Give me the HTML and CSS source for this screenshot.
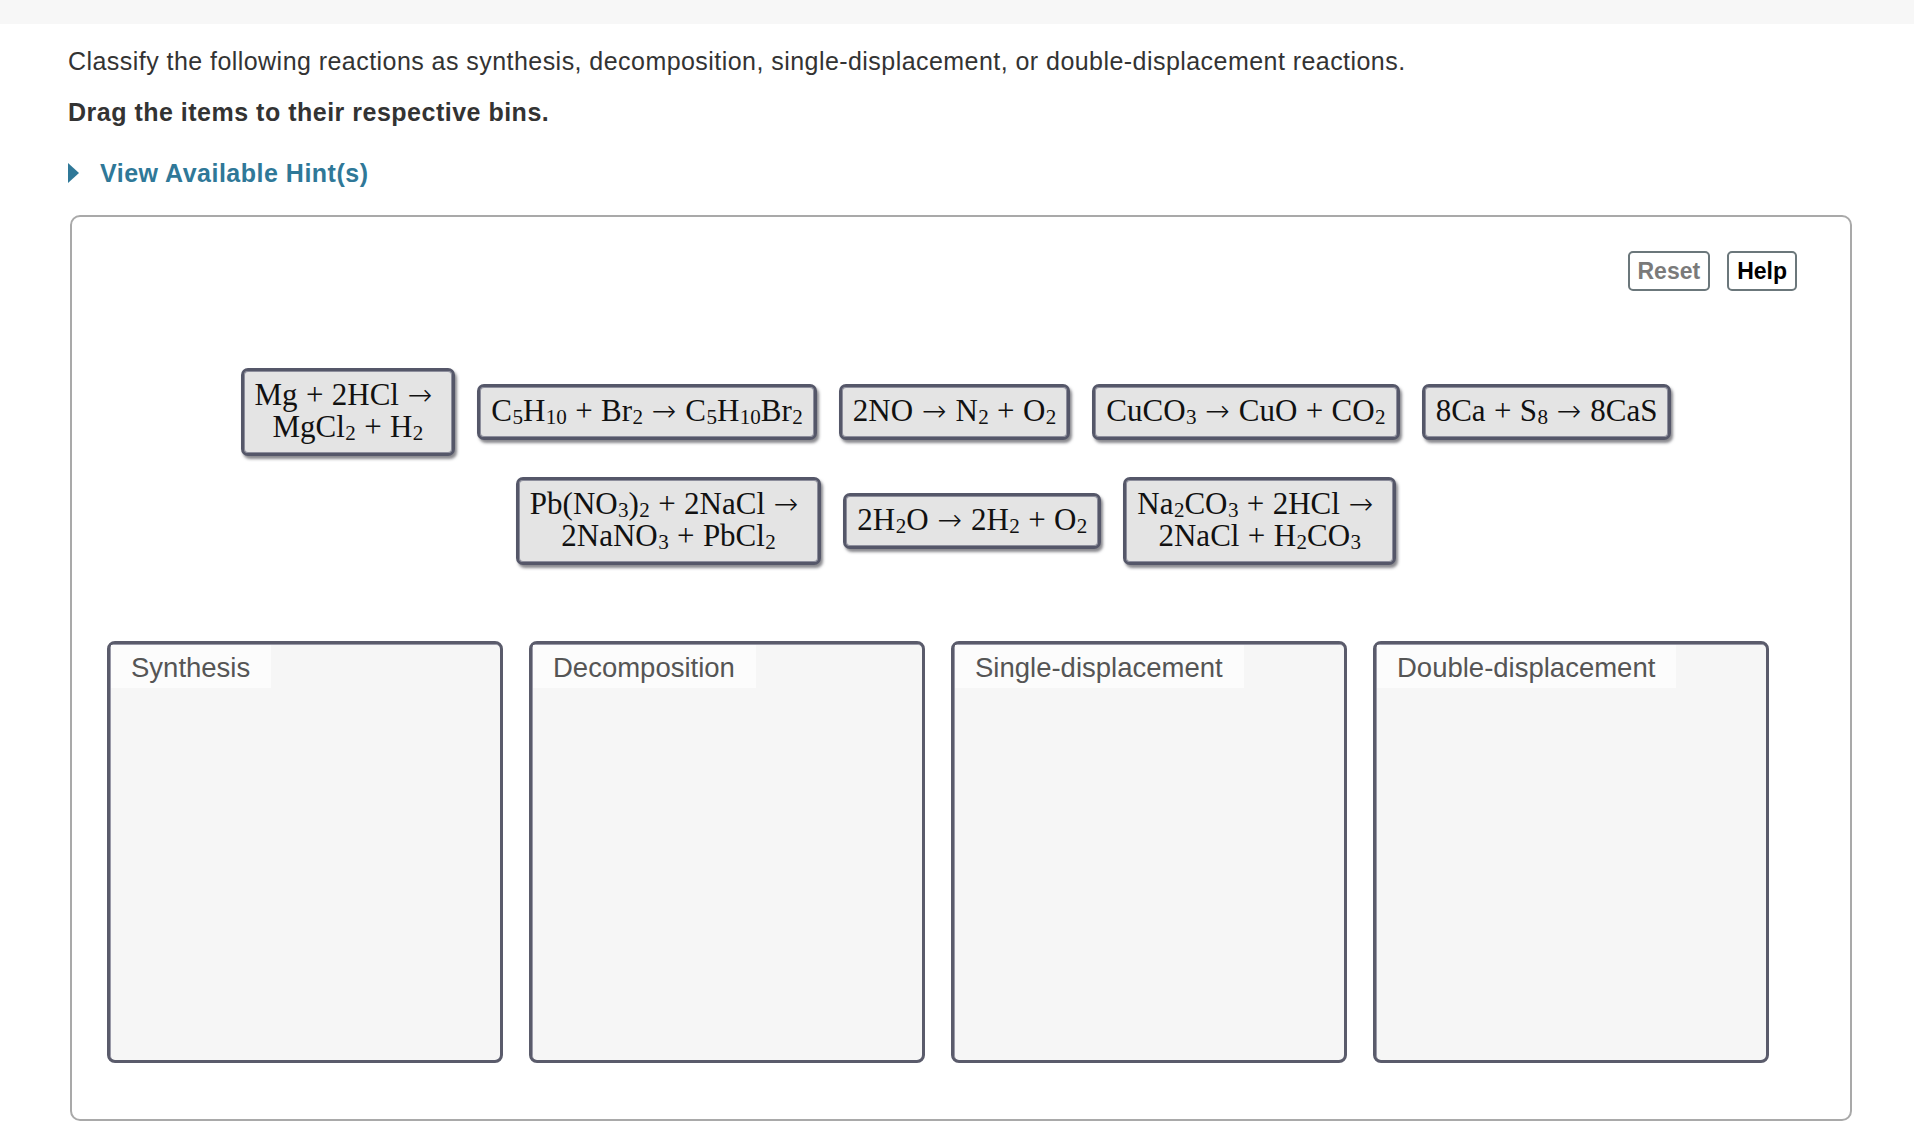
FILE: index.html
```html
<!DOCTYPE html>
<html lang="en">
<head>
<meta charset="utf-8">
<title>Classify reactions</title>
<link rel="stylesheet" href="styles.css">
</head>
<body>
<div class="topbar"></div>
<main class="content">
  <p class="prompt">Classify the following reactions as synthesis, decomposition, single-displacement, or double-displacement reactions.</p>
  <p class="instr">Drag the items to their respective bins.</p>
  <div class="hint"><span class="tri"></span><span class="hint-text">View Available Hint(s)</span></div>

  <section class="board">
    <div class="toolbar">
      <button class="btn reset">Reset</button>
      <button class="btn help">Help</button>
    </div>

    <div class="tile-row">
      <div class="tile">
        <div class="eq">Mg<span class="op">+</span>2HCl<span class="rel">→</span></div>
        <div class="eq">MgCl<sub>2</sub><span class="op">+</span>H<sub>2</sub></div>
      </div>
      <div class="tile">
        <div class="eq">C<sub>5</sub>H<sub>10</sub><span class="op">+</span>Br<sub>2</sub><span class="rel">→</span>C<sub>5</sub>H<sub>10</sub>Br<sub>2</sub></div>
      </div>
      <div class="tile">
        <div class="eq">2NO<span class="rel">→</span>N<sub>2</sub><span class="op">+</span>O<sub>2</sub></div>
      </div>
      <div class="tile">
        <div class="eq">CuCO<sub>3</sub><span class="rel">→</span>CuO<span class="op">+</span>CO<sub>2</sub></div>
      </div>
      <div class="tile">
        <div class="eq">8Ca<span class="op">+</span>S<sub>8</sub><span class="rel">→</span>8CaS</div>
      </div>
    </div>

    <div class="tile-row second">
      <div class="tile">
        <div class="eq">Pb(NO<sub>3</sub>)<sub>2</sub><span class="op">+</span>2NaCl<span class="rel">→</span></div>
        <div class="eq">2NaNO<sub>3</sub><span class="op">+</span>PbCl<sub>2</sub></div>
      </div>
      <div class="tile">
        <div class="eq">2H<sub>2</sub>O<span class="rel">→</span>2H<sub>2</sub><span class="op">+</span>O<sub>2</sub></div>
      </div>
      <div class="tile">
        <div class="eq">Na<sub>2</sub>CO<sub>3</sub><span class="op">+</span>2HCl<span class="rel">→</span></div>
        <div class="eq">2NaCl<span class="op">+</span>H<sub>2</sub>CO<sub>3</sub></div>
      </div>
    </div>

    <div class="bins">
      <div class="bin"><span class="bin-label">Synthesis</span></div>
      <div class="bin"><span class="bin-label">Decomposition</span></div>
      <div class="bin"><span class="bin-label">Single-displacement</span></div>
      <div class="bin"><span class="bin-label">Double-displacement</span></div>
    </div>
  </section>
</main>
</body>
</html>
```

FILE: styles.css
```css
html, body {
  margin: 0;
  padding: 0;
  background: #ffffff;
}

body {
  font-family: "Liberation Sans", Arial, Helvetica, sans-serif;
  color: #333333;
  overflow: hidden;
}

.topbar {
  height: 24px;
  background: #f7f7f7;
}

.content {
  padding: 0 62px 0 68px;
}

.prompt {
  margin: 22px 0 0;
  font-size: 25px;
  letter-spacing: 0.45px;
  line-height: 30px;
  color: #333333;
}

.instr {
  margin: 21px 0 0;
  font-size: 25px;
  letter-spacing: 0.5px;
  line-height: 30px;
  font-weight: bold;
  color: #333333;
}

.hint {
  margin: 31px 0 0;
  height: 30px;
  display: flex;
  align-items: center;
  color: #2f7898;
  font-size: 25px;
  letter-spacing: 0.5px;
  font-weight: bold;
}

.tri {
  width: 0;
  height: 0;
  border-left: 11px solid #2f7898;
  border-top: 10px solid transparent;
  border-bottom: 10px solid transparent;
  margin-right: 21px;
}

.board {
  margin: 27px 0 0 2px;
  height: 906px;
  box-sizing: border-box;
  border: 2px solid #a9a9a9;
  border-radius: 10px;
}

.toolbar {
  display: flex;
  justify-content: flex-end;
  gap: 17px;
  padding: 34px 53px 0 0;
}

.btn {
  height: 40px;
  padding: 0 8px;
  border: 2px solid #6b777b;
  border-radius: 5px;
  background: #ffffff;
  font-family: "Liberation Sans", Arial, sans-serif;
  font-size: 23px;
  font-weight: bold;
  cursor: pointer;
}

.reset {
  color: #7a7a7a;
}

.help {
  color: #000000;
}

.tile-row {
  display: flex;
  justify-content: center;
  align-items: center;
  gap: 22px;
  margin-top: 77px;
  padding-right: 10px;
}

.tile-row.second {
  margin-top: 21px;
}

.tile {
  box-sizing: border-box;
  padding: 8px 11px 10px;
  background: #e4e4e4;
  border: 3px solid #555769;
  border-radius: 7px;
  box-shadow: inset 0 0 0 1px #8d8e9c, 2px 3px 3px rgba(40, 40, 50, 0.55);
  font-family: "Liberation Serif", "Times New Roman", serif;
  font-size: 31px;
  line-height: 32px;
  color: #111111;
  text-align: center;
  white-space: nowrap;
}

.eq sub {
  font-size: 0.68em;
  line-height: 0;
  vertical-align: -0.14em;
  margin-left: 0.02em;
}

.op {
  margin: 0 0.27em;
}

.rel {
  margin: 0 0.3em;
  font-family: "DejaVu Sans", sans-serif;
  font-weight: 200;
  font-size: 0.95em;
}

.bins {
  display: grid;
  grid-template-columns: repeat(4, 396px);
  gap: 26px;
  margin: 76px 0 0 35px;
}

.bin {
  box-sizing: border-box;
  height: 422px;
  background: #f6f6f6;
  border: 3px solid #5a5b6b;
  border-radius: 8px;
  box-shadow: inset 1px 1px 0 #9a9aa8;
}

.bin-label {
  display: inline-block;
  margin: 1px;
  padding: 3px 21px 0 20px;
  line-height: 40px;
  background: #fcfcfc;
  color: #555555;
  font-size: 27.5px;
}
```
